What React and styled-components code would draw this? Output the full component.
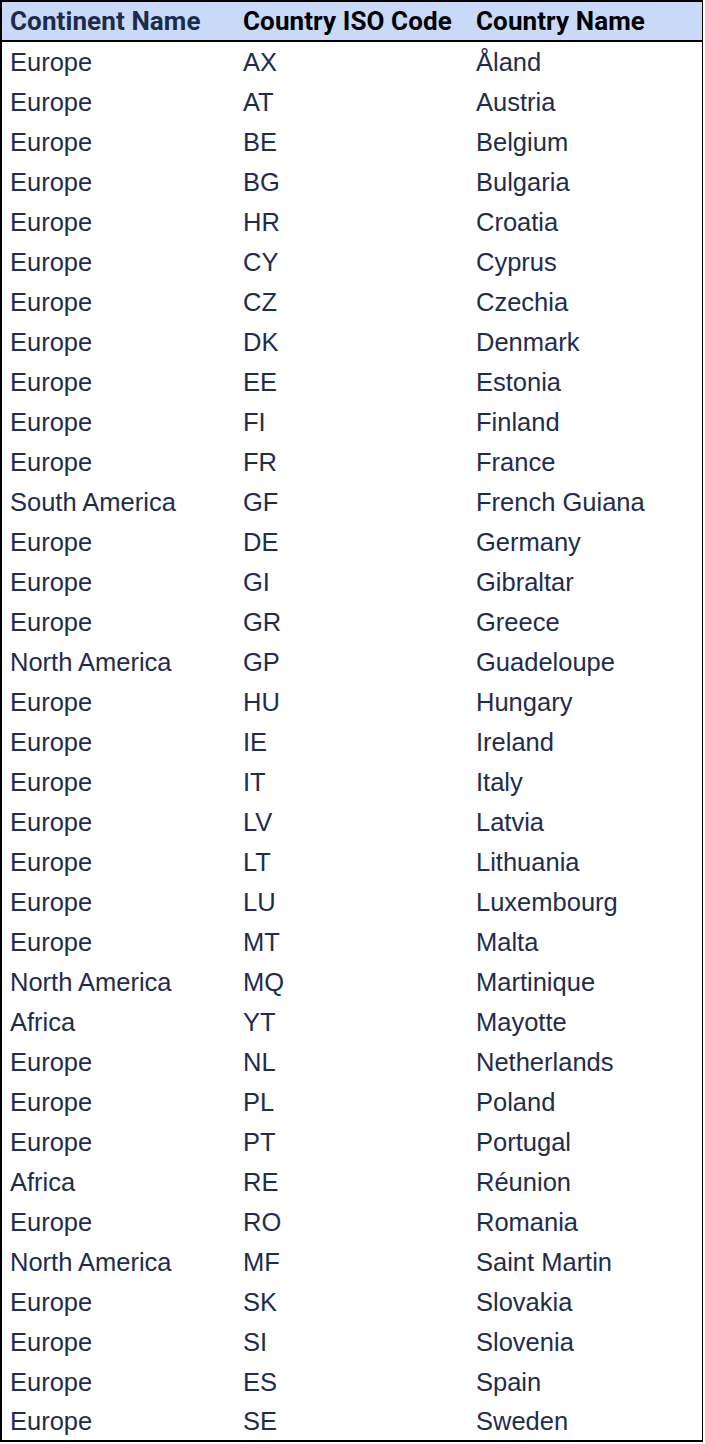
import React from 'react';
import styled, { createGlobalStyle } from 'styled-components';

const GlobalStyle = createGlobalStyle`
  html, body {
    margin: 0;
    padding: 0;
    background: #ffffff;
  }
`;

const Table = styled.div`
  width: 703px;
  box-sizing: border-box;
  border-top: 2px solid #000;
  border-left: 2px solid #000;
  border-right: 1px solid #000;
  border-bottom: 2px solid #000;
`;

const Row = styled.div`
  display: grid;
  grid-template-columns: 233px 233px 1fr;
  align-items: center;
  height: ${p => (p.$last ? 38 : 40)}px;
`;

const HeaderRow = styled(Row)`
  height: 38px;
  background: #c9daf8;
  border-bottom: 2px solid #000;
  margin-right: -1px;
  border-right: 1px solid #000;
`;

const HeadCell = styled.div`
  padding-left: 8px;
  font-family: Roboto, "Liberation Sans", sans-serif;
  font-weight: 700;
  font-size: 26px;
  letter-spacing: 0.1px;
  color: ${p => (p.$navy ? '#1c2b4a' : '#000')};
  white-space: nowrap;
`;

const Cell = styled.div`
  padding-left: 8px;
  font-family: "Liberation Sans", Arial, sans-serif;
  font-size: 25.5px;
  color: #1f2d4d;
  white-space: nowrap;
`;

const rows = [
  ['Europe', 'AX', 'Åland'],
  ['Europe', 'AT', 'Austria'],
  ['Europe', 'BE', 'Belgium'],
  ['Europe', 'BG', 'Bulgaria'],
  ['Europe', 'HR', 'Croatia'],
  ['Europe', 'CY', 'Cyprus'],
  ['Europe', 'CZ', 'Czechia'],
  ['Europe', 'DK', 'Denmark'],
  ['Europe', 'EE', 'Estonia'],
  ['Europe', 'FI', 'Finland'],
  ['Europe', 'FR', 'France'],
  ['South America', 'GF', 'French Guiana'],
  ['Europe', 'DE', 'Germany'],
  ['Europe', 'GI', 'Gibraltar'],
  ['Europe', 'GR', 'Greece'],
  ['North America', 'GP', 'Guadeloupe'],
  ['Europe', 'HU', 'Hungary'],
  ['Europe', 'IE', 'Ireland'],
  ['Europe', 'IT', 'Italy'],
  ['Europe', 'LV', 'Latvia'],
  ['Europe', 'LT', 'Lithuania'],
  ['Europe', 'LU', 'Luxembourg'],
  ['Europe', 'MT', 'Malta'],
  ['North America', 'MQ', 'Martinique'],
  ['Africa', 'YT', 'Mayotte'],
  ['Europe', 'NL', 'Netherlands'],
  ['Europe', 'PL', 'Poland'],
  ['Europe', 'PT', 'Portugal'],
  ['Africa', 'RE', 'Réunion'],
  ['Europe', 'RO', 'Romania'],
  ['North America', 'MF', 'Saint Martin'],
  ['Europe', 'SK', 'Slovakia'],
  ['Europe', 'SI', 'Slovenia'],
  ['Europe', 'ES', 'Spain'],
  ['Europe', 'SE', 'Sweden'],
];

export default function App() {
  return (
    <>
      <GlobalStyle />
      <Table>
        <HeaderRow>
          <HeadCell $navy>Continent Name</HeadCell>
          <HeadCell>Country ISO Code</HeadCell>
          <HeadCell>Country Name</HeadCell>
        </HeaderRow>
        {rows.map((r, i) => (
          <Row key={r[1]} $last={i === rows.length - 1}>
            <Cell>{r[0]}</Cell>
            <Cell>{r[1]}</Cell>
            <Cell>{r[2]}</Cell>
          </Row>
        ))}
      </Table>
    </>
  );
}
